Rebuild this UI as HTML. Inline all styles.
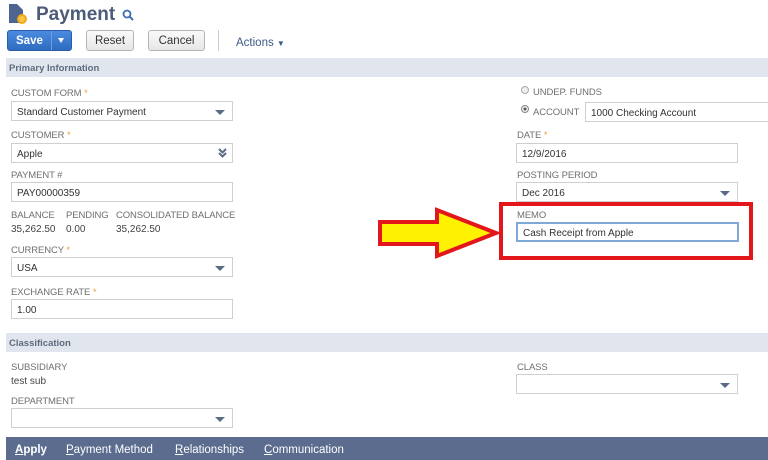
<!DOCTYPE html>
<html><head><meta charset="utf-8"><style>
*{margin:0;padding:0;box-sizing:border-box}
body{width:768px;height:460px;overflow:hidden;background:#fff;font-family:"Liberation Sans",sans-serif;position:relative;color:#333}
.a{position:absolute}
.lbl{position:absolute;font-size:9.5px;color:#6f6f6f;letter-spacing:-.1px}
.lbl b{color:#e8a33a;font-weight:normal}
.in{position:absolute;border:1px solid #cfcfcf;background:#fff;font-size:10px;color:#333;padding:5px 0 0 5px;height:20px}
.dd::after{content:"";position:absolute;right:7px;top:8px;border-left:5px solid transparent;border-right:5px solid transparent;border-top:5px solid #5a6b85}
.bar{position:absolute;left:6px;right:0;height:19px;background:#e1e6ee;font-size:9.5px;font-weight:bold;color:#5d6b7e;padding:5px 0 0 3px}
.btn{position:absolute;border:1px solid #b5b5b5;border-radius:3px;background:linear-gradient(#fafafa,#e6e6e6);font-size:11.5px;color:#333;text-align:center;padding-top:4px;height:21px}
.val{position:absolute;font-size:10px;color:#444}
</style></head><body>
<svg class="a" style="left:8px;top:3px" width="22" height="22" viewBox="0 0 22 22"><path d="M1 1h8l6 6v13H1z" fill="#4e6491"/><circle cx="14" cy="16" r="5" fill="#f0a81c"/><circle cx="14" cy="16" r="3" fill="#f7c548"/></svg>
<div class="a" style="left:36px;top:4px;font-size:19px;font-weight:bold;color:#4c5c78">Payment</div>
<svg class="a" style="left:122px;top:9px" width="12" height="12" viewBox="0 0 12 12"><circle cx="5" cy="5" r="3.5" fill="none" stroke="#3d6fb5" stroke-width="1.8"/><path d="M7.5 7.5L11 11" stroke="#3d6fb5" stroke-width="2"/></svg>
<div class="a" style="left:7px;top:30px;width:65px;height:21px;border-radius:3px;background:linear-gradient(#4a8be0,#2f6cc0);border:1px solid #2a5fa8"></div>
<div class="a" style="left:51px;top:31px;width:1px;height:19px;background:#6f9de0"></div>
<div class="a" style="left:16px;top:35px;font-size:11.5px;font-weight:bold;color:#fff">Save</div>
<div class="a" style="left:58px;top:38px;border-left:3.5px solid transparent;border-right:3.5px solid transparent;border-top:5px solid #fff"></div>
<div class="btn" style="left:86px;top:30px;width:48px">Reset</div>
<div class="btn" style="left:148px;top:30px;width:57px">Cancel</div>
<div class="a" style="left:218px;top:30px;width:1px;height:21px;background:#ccc"></div>
<div class="a" style="left:236px;top:37px;font-size:11.5px;color:#3b5a86">Actions <span style="font-size:8px">▼</span></div>
<div class="bar" style="top:58px">Primary Information</div>

<div class="lbl" style="left:11px;top:88px">CUSTOM FORM <b>*</b></div>
<div class="in dd" style="left:11px;top:101px;width:222px">Standard Customer Payment</div>
<div class="lbl" style="left:11px;top:130px">CUSTOMER <b>*</b></div>
<div class="in" style="left:11px;top:143px;width:222px">Apple<svg class="a" style="right:5px;top:4px" width="9" height="10" viewBox="0 0 9 10"><path d="M1 1l3.5 3.5L8 1M1 5l3.5 3.5L8 5" fill="none" stroke="#5a6b85" stroke-width="2"/></svg></div>
<div class="lbl" style="left:11px;top:170px">PAYMENT #</div>
<div class="in" style="left:11px;top:182px;width:222px">PAY00000359</div>
<div class="lbl" style="left:11px;top:210px">BALANCE</div><div class="lbl" style="left:66px;top:210px">PENDING</div><div class="lbl" style="left:116px;top:210px">CONSOLIDATED BALANCE</div>
<div class="val" style="left:11px;top:224px">35,262.50</div><div class="val" style="left:66px;top:224px">0.00</div><div class="val" style="left:116px;top:224px">35,262.50</div>
<div class="lbl" style="left:11px;top:245px">CURRENCY <b>*</b></div>
<div class="in dd" style="left:11px;top:257px;width:222px">USA</div>
<div class="lbl" style="left:11px;top:287px">EXCHANGE RATE <b>*</b></div>
<div class="in" style="left:11px;top:299px;width:222px">1.00</div>

<div class="a" style="left:521px;top:86px;width:8px;height:8px;border-radius:50%;border:1px solid #aaa;background:#eee"></div>
<div class="lbl" style="left:533px;top:87px">UNDEP. FUNDS</div>
<div class="a" style="left:521px;top:105px;width:8px;height:8px;border-radius:50%;border:1px solid #888;background:radial-gradient(#555 30%,#eee 40%)"></div>
<div class="lbl" style="left:533px;top:107px">ACCOUNT</div>
<div class="in" style="left:585px;top:102px;width:190px">1000 Checking Account</div>
<div class="lbl" style="left:517px;top:130px">DATE <b>*</b></div>
<div class="in" style="left:516px;top:143px;width:222px">12/9/2016</div>
<div class="lbl" style="left:517px;top:170px">POSTING PERIOD</div>
<div class="in dd" style="left:516px;top:182px;width:222px">Dec 2016</div>
<div class="a" style="left:499px;top:202px;width:254px;height:58px;border:4px solid #e3161c"></div>
<div class="lbl" style="left:517px;top:210px">MEMO</div>
<div class="in" style="left:516px;top:222px;width:223px;border:2px solid #7fa7d8;padding-top:4px">Cash Receipt from Apple</div>
<svg class="a" style="left:376px;top:205px" width="124" height="56" viewBox="0 0 124 56"><path d="M4 17H61V5L120 28L61 51V39H4Z" fill="#fff200" stroke="#e3161c" stroke-width="4" stroke-linejoin="miter"/></svg>

<div class="bar" style="top:333px">Classification</div>
<div class="lbl" style="left:11px;top:362px">SUBSIDIARY</div>
<div class="val" style="left:11px;top:376px">test sub</div>
<div class="lbl" style="left:11px;top:396px">DEPARTMENT</div>
<div class="in dd" style="left:11px;top:408px;width:222px"></div>
<div class="lbl" style="left:517px;top:362px">CLASS</div>
<div class="in dd" style="left:516px;top:374px;width:222px"></div>

<div class="a" style="left:6px;top:437px;right:0;height:23px;background:#5b6c8f;color:#fff;font-size:11.5px">
<span class="a" style="left:9px;top:7px;font-weight:bold"><u>A</u>pply</span>
<span class="a" style="left:60px;top:7px"><u>P</u>ayment Method</span>
<span class="a" style="left:169px;top:7px"><u>R</u>elationships</span>
<span class="a" style="left:258px;top:7px"><u>C</u>ommunication</span>
</div>
</body></html>
